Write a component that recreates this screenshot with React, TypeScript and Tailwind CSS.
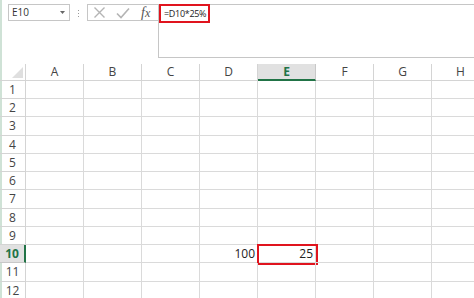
import { Fragment } from "react";

// Excel 2013 style sheet: name box + formula bar, grid A–H, rows 1–12.

const COLS = ["A", "B", "C", "D", "E", "F", "G", "H"];
const ROW_H = [18, 18, 19, 18, 18, 18, 19, 18, 18, 18, 19, 18];
const ACTIVE_COL = "E";
const ACTIVE_ROW = 10;

const font = { fontFamily: '"Open Sans", "Liberation Sans", Arial, sans-serif' };

function CancelIcon() {
  return (
    <svg width="13" height="13" viewBox="0 0 13 13" aria-hidden>
      <path d="M1.5 1.5 L11.5 11.5 M11.5 1.5 L1.5 11.5" stroke="#b4b4b4" strokeWidth="1.4" fill="none" />
    </svg>
  );
}

function EnterIcon() {
  return (
    <svg width="14" height="12" viewBox="0 0 14 12" aria-hidden>
      <path d="M1 6.5 L5 10.5 L13 1.5" stroke="#b4b4b4" strokeWidth="1.6" fill="none" />
    </svg>
  );
}

function FormulaBar() {
  return (
    <div className="flex h-[64px] items-start pt-[4px]">
      {/* name box */}
      <div className="ml-[6px] flex h-[17px] w-[62px] items-center justify-between border border-[#c6c6c6] bg-white pl-[3px] pr-[4px] text-[10px] text-[#333]">
        <span>E10</span>
        <svg width="5" height="3" viewBox="0 0 5 3" aria-hidden>
          <path d="M0 0 L5 0 L2.5 3 Z" fill="#666" />
        </svg>
      </div>
      {/* dotted grip */}
      <div className="ml-[8px] mt-[6px] flex flex-col gap-[2px]">
        <span className="h-[1px] w-[1px] bg-[#9a9a9a]" />
        <span className="h-[1px] w-[1px] bg-[#9a9a9a]" />
        <span className="h-[1px] w-[1px] bg-[#9a9a9a]" />
      </div>
      {/* cancel / enter / fx */}
      <div className="ml-[8px] flex h-[17px] w-[71px] items-center border border-r-0 border-[#c6c6c6] bg-white pl-[5px]">
        <CancelIcon />
        <span className="ml-[10px]">
          <EnterIcon />
        </span>
        <span
          className="ml-[11px] text-[14px] italic leading-none text-[#555]"
          style={{ fontFamily: '"Liberation Serif", "Times New Roman", serif' }}
        >
          f<span className="text-[12px]">x</span>
        </span>
      </div>
      {/* formula input */}
      <div className="relative h-[54px] flex-1 border border-r-0 border-[#c6c6c6] bg-white">
        <div className="absolute left-[0px] top-[-1px] flex h-[19px] w-[51px] items-center whitespace-nowrap border-2 border-[#e0141e] pl-[3px] text-[9px] tracking-[-0.3px] text-[#222]">
          =D10*25%
        </div>
      </div>
    </div>
  );
}

function Grid() {
  return (
    <div className="grid grid-cols-[26px_repeat(8,58px)] overflow-hidden">
      {/* header row */}
      <div className="flex h-[17px] items-end justify-end border-r border-b border-[#d4d4d4] pr-[2px] pb-[2px]">
        <svg width="11" height="11" viewBox="0 0 11 11" aria-hidden>
          <path d="M11 0 L11 11 L0 11 Z" fill="#dfdfdf" />
        </svg>
      </div>
      {COLS.map((c) =>
        c === ACTIVE_COL ? (
          <div
            key={c}
            className="flex h-[17px] items-center justify-center border-r border-[#c8c8c8] border-b-2 border-b-[#217346] bg-[#e1e1e1] text-[12px] font-bold text-[#217346]"
          >
            {c}
          </div>
        ) : (
          <div
            key={c}
            className="flex h-[17px] items-center justify-center border-r border-b border-[#d4d4d4] text-[12px] text-[#444]"
          >
            {c}
          </div>
        ),
      )}

      {ROW_H.map((h, i) => {
        const r = i + 1;
        const active = r === ACTIVE_ROW;
        return (
          <Fragment key={r}>
            {active ? (
              <div
                className="flex items-center justify-center border-b border-[#c8c8c8] border-r-2 border-r-[#217346] bg-[#e1e1e1] text-[12px] font-bold text-[#217346]"
                style={{ height: h }}
              >
                {r}
              </div>
            ) : (
              <div
                className="flex items-center justify-center border-r border-b border-[#d4d4d4] text-[12px] text-[#444]"
                style={{ height: h }}
              >
                {r}
              </div>
            )}
            {COLS.map((c) => {
              const id = `${c}${r}`;
              return (
                <div
                  key={id}
                  className="relative flex items-end justify-end border-r border-b border-[#dadada] pr-[2px] text-[12px] leading-[16px] text-[#222]"
                  style={{ height: h }}
                >
                  {id === "D10" && <span>100</span>}
                  {id === "E10" && (
                    <>
                      <span>25</span>
                      <div className="absolute left-[-1px] top-[-1px] h-[21px] w-[61px] border-2 border-[#e0141e]" />
                    </>
                  )}
                </div>
              );
            })}
          </Fragment>
        );
      })}
    </div>
  );
}

export default function App() {
  return (
    <div className="flex h-[298px] w-[474px] overflow-hidden bg-white" style={font}>
      <div className="w-[2px] shrink-0 bg-[#cfe2d6]" />
      <div className="min-w-0 flex-1">
        <FormulaBar />
        <div className="-ml-[2px]">
          <Grid />
        </div>
      </div>
    </div>
  );
}
